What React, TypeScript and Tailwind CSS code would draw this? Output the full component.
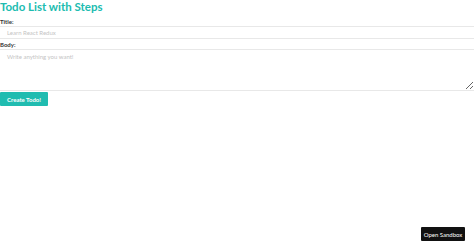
export default function App() {
  return (
    <div className="relative h-[248px] w-[474px] overflow-hidden bg-white font-['Lato',sans-serif]">
      <h1 className="m-0 text-[11.5px] font-bold leading-[14px] text-[#20bcb0]">Todo List with Steps</h1>
      <form className="mt-[4px]" onSubmit={(e) => e.preventDefault()}>
        <label className="block text-[6px] font-bold leading-[8px] text-[#333]">Title:</label>
        <input
          className="block h-[13px] w-full border-y border-[#e8e8e8] px-[7px] text-[6px] outline-none placeholder:text-[#c4c4c4]"
          placeholder="Learn React Redux"
        />
        <label className="mt-[2px] block text-[6px] font-bold leading-[8px] text-[#333]">Body:</label>
        <textarea
          className="block h-[42px] w-full border-y border-[#e8e8e8] px-[7px] py-[2px] text-[6px] outline-none placeholder:text-[#c4c4c4]"
          placeholder="Write anything you want!"
        />
        <button
          type="submit"
          className="mt-[1px] block h-[14px] w-[48px] rounded-[1px] bg-[#20bcb0] text-[6px] font-bold text-white"
        >
          Create Todo!
        </button>
      </form>
      <button className="absolute bottom-[7px] right-[9px] h-[14px] w-[44px] rounded-[1px] bg-[#111] text-[6px] text-white">
        Open Sandbox
      </button>
    </div>
  );
}
